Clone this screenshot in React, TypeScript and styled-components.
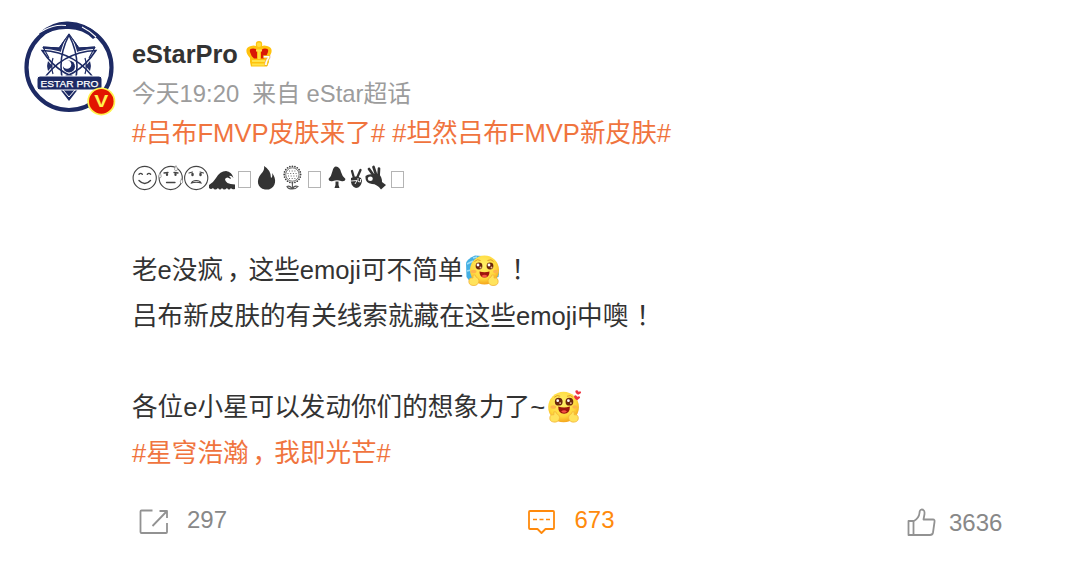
import React from 'react';
import styled, { createGlobalStyle } from 'styled-components';

const Global = createGlobalStyle`
  body { margin: 0; background: #fff; }
  * { box-sizing: border-box; }
  svg { display: block; flex: none; }
`;

const Post = styled.article`
  display: flex;
  width: 1080px;
  height: 562px;
  padding: 20px 0 0 22px;
  background: #fff;
  color: #333;
  font-family: "Liberation Sans", "Noto Sans CJK SC", sans-serif;
  font-size: 25.6px;
`;
const AvatarColumn = styled.div`
  width: 110px;
  flex: none;
`;
const Content = styled.div`
  flex: 1;
  display: flex;
  flex-direction: column;
  padding-top: 14px;
`;
const Row = styled.div<{ $h: number; $lift?: number }>`
  display: flex;
  align-items: center;
  height: ${(p) => p.$h}px;
  padding-bottom: ${(p) => p.$lift ?? 0}px;
  white-space: pre;
`;
const Name = styled.span`
  font-weight: 700;
  font-size: 25.4px;
  margin-right: 8px;
`;
const Meta = styled.span`
  font-size: 23.8px;
  color: #9c9c9c;
`;
const Topic = styled.span`
  color: #f0743e;
`;
const Punct = styled.span<{ $indent: number }>`
  display: inline-block;
  width: 1em;
  padding-left: ${(p) => p.$indent}px;
  font-feature-settings: "halt";
`;
const Box = styled.span`
  width: 13px;
  height: 17px;
  border: 1px solid #b4b4b4;
  margin: 2px 4px 0 3px;
`;
const Sticker = styled.span`
  display: flex;
  padding: 4px 1px 0 3px;
`;
const Actions = styled.footer`
  display: flex;
  height: 50px;
  margin-top: 18px;
  padding-left: 6px;
`;
const Action = styled.div<{ $w: number; $color: string; $gap: number; $top: number }>`
  display: flex;
  align-items: center;
  width: ${(p) => p.$w}px;
  height: 50px;
  padding-top: ${(p) => p.$top}px;
  gap: ${(p) => p.$gap}px;
  color: ${(p) => p.$color};
  font-size: 24px;
`;

const lens = 'M47 15 Q63 46 47 77 Q31 46 47 15Z';
const turns = [0, 60, 120];

const Avatar = () => (
  <svg width="96" height="98" viewBox="0 0 96 98">
    <circle cx="47" cy="47.500" r="42.500" fill="#fff" stroke="#1d2a64" strokeWidth="4.200" />
    <path d="M17 13 Q30 1 46 1.500 Q64 2 77 15 L71 19 Q61 9 47 9 Q31 8 19 17Z" fill="#1d2a64" />
    <path d="M22 10 Q33 4 44 5.500 M15 14 L24 9 M60 7 Q68 11 74 17" fill="none" stroke="#fff" strokeWidth="1.100" />
    <g fill="none" stroke="#1d2a64">
      <path d="M47 14 L57 28 L73 27 L67 38 A25 25 0 0 1 67 54 L73 63 L57 65 L47 79 L37 65 L21 63 L27 54 A25 25 0 0 1 27 38 L21 27 L37 28Z" fill="#25316a" strokeWidth="1" />
      {turns.map((t) => <path key={t} d={lens} fill="#fff" stroke="#fff" strokeWidth="3.500" transform={`rotate(${t} 47 46)`} />)}
      <path d="M47 14 L56 27 M47 14 L38 27 M21 27 L37 28 M73 27 L57 28 M21 27 L27 38 M73 27 L67 38" strokeWidth="1.200" />
      {turns.map((t) => <path key={t} d={lens} strokeWidth="1.600" transform={`rotate(${t} 47 46)`} />)}
      <path d="M31 38 A26 26 0 0 0 31 54 M63 38 A26 26 0 0 1 63 54" strokeWidth="1.200" />
    </g>
    <circle cx="47" cy="46.500" r="6" fill="#1d2a64" />
    <circle cx="45" cy="44.500" r="4.300" fill="#fff" />
    <path d="M37 68 H57 L47 81Z" fill="#1d2a64" />
    <path d="M41 70 L47 77 L53 70" fill="none" stroke="#fff" />
    <rect x="15" y="56" width="65" height="14" rx="3" fill="#1d2a64" stroke="#fff" strokeWidth="1" />
    <text x="18.500" y="66.500" textLength="58" lengthAdjust="spacingAndGlyphs" fill="#fff" stroke="#fff" strokeWidth=".25" fontFamily="Liberation Sans, sans-serif" fontSize="9.200">ESTAR PRO</text>
    <circle cx="79.300" cy="81.400" r="14" fill="#fff34f" />
    <circle cx="79.300" cy="81.400" r="12.300" fill="#e21500" />
    <text x="72.300" y="87" textLength="14" lengthAdjust="spacingAndGlyphs" fill="#fff34f" fontFamily="Liberation Sans, sans-serif" fontWeight="700" fontSize="16.500">V</text>
  </svg>
);

const Crown = () => (
  <svg width="26" height="28" viewBox="0 0 26 28">
    <path d="M4 18 C-1 13 -1 7 5 6 Q8 5 10 6 Q9 1 13 1 Q17 1 16 6 Q18 5 21 6 C27 7 27 13 22 18 L23 22 L21 26.500 H5 L4 22Z" fill="#ffc20d" />
    <path d="M4 12 Q3 8.500 7 8.500 Q11 8.500 11 12 V18.500 H8 Q5 16 4 12 M22 12 Q23 8.500 19 8.500 Q15 8.500 15 12 V18.500 H18 Q21 16 22 12" fill="#d91806" />
    <path d="M10 10.500 H16 M13 10.500 V19" stroke="#ffe34a" strokeWidth="1.800" />
    <circle cx="13" cy="4.800" r="2.200" fill="#ffdf3d" />
    <path d="M6 21 H19 M6 24.500 H19" stroke="#ffe34a" strokeWidth="1.800" />
    <text x="17.500" y="25" fill="#fff" stroke="#f2b51c" strokeWidth="1.500" paintOrder="stroke" fontFamily="Liberation Sans, sans-serif" fontWeight="700" fontSize="12">7</text>
  </svg>
);

const Face = ({ kind }: { kind: 'smile' | 'sweat' | 'worry' }) => (
  <svg width={kind === 'worry' ? 25 : 26} height="28" viewBox={kind === 'worry' ? '.5 0 25 28' : '0 0 26 28'} fill="none" stroke="#444" strokeWidth="1.100" strokeLinecap="round">
    <circle cx="12.700" cy="14" r="11.600" />
    {kind === 'smile' && <path d="M7 16.500 Q12.700 22.500 18.500 16.500 M7 10.200 Q8.700 8.500 10.300 10.200 M15.300 10.200 Q17 8.500 18.600 10.200" strokeWidth="1.400" />}
    {kind === 'sweat' && <><path d="M6 9 L10 8.500 M16 8.500 L20 9 M8.500 18.500 H17" strokeWidth="1.300" /><path d="M9 10 V11 M17.500 10 V11" strokeWidth="2.200" /><path d="M18 2 Q15 6 18 7 Q21 6 18 2 M23.500 15 Q21 18.500 23.500 19.500 Q26 18.500 23.500 15 M2 9 Q-.5 13 2 14 Q4.500 13 2 9" fill="#fff" stroke="#888" strokeWidth=".8" /></>}
    {kind === 'worry' && <><path d="M5.500 9 L9 8 M16.500 8 L20 9 M8 19 Q9 16.500 12.700 16.500 Q16.500 16.500 17.500 19 Q12.700 17.500 8 19Z" /><path d="M9 10 V11 M17 10 V11" strokeWidth="2.400" /></>}
  </svg>
);

const Wave = () => (
  <svg width="26" height="28" viewBox="0 0 26 28">
    <path d="M0 24 V21 Q4 19 7 14 Q11 7 17 7 Q23 8 24.500 14 Q22 11 20 12 Q22.500 14 21.500 15 Q18 12 16 15 Q16 20 26 20.500 V25 Q23 26 22 24 Q20 27 18 24 Q15 27 13 24 Q11 27 9 24 Q6 27 4 24 Q2 26 0 24" fill="#333" />
  </svg>
);
const Fire = () => (
  <svg width="24" height="28" viewBox="0 0 24 28">
    <path d="M9 2 Q10 6 6 10 C1 16 2 24 10 25.500 H14 C21 23 22 15 17 9 Q18 13 16 14 Q16 6 9 2" fill="#333" />
  </svg>
);
const petals = Array.from({ length: 20 }, (_, i) => {
  const a = (i * Math.PI) / 10;
  return { x: 13.4 + Math.cos(a) * 8.2, y: 10.5 + Math.sin(a) * 8.2 };
});
const Sunflower = () => (
  <svg width="26" height="28" viewBox="0 0 26 28" fill="none" stroke="#555">
    {petals.map((p, i) => <circle key={i} cx={p.x} cy={p.y} r=".900" fill="#444" stroke="none" />)}
    <circle cx="13.400" cy="10.500" r="6.700" strokeWidth=".8" />
    <path d="M10 7 H18 M8.500 9.500 H19 M9 12 H19 M10 14.500 H17" strokeDasharray="1 1.700" strokeWidth=".9" />
    <path d="M13.400 18 V25.500 M13.400 25 Q11 21 8 22.500 Q9 25 13.400 25 Q17 25 19 22.500 Q15 21 13.400 25" strokeWidth="1.100" />
  </svg>
);
const Mushroom = () => (
  <svg width="24" height="28" viewBox="0 0 24 28">
    <path d="M11 2.500 Q15 3 16 8 Q17 12 20.500 15 Q20 18 16 17 Q12 15.500 8 17 Q4 18 3.500 15 Q6.500 12 7.500 7 Q8.500 2.500 11 2.500" fill="#333" />
    <path d="M10.500 17.500 H13.500 Q13 21 14.500 24 H9.500 Q11 21 10.500 17.500" fill="#333" />
  </svg>
);
const Victory = () => (
  <svg width="15" height="28" viewBox="0 0 15 28">
    <path d="M5 14 L3 7 M8 14 L11.500 6" stroke="#333" strokeWidth="2.300" strokeLinecap="round" />
    <path d="M2 14 Q7 11 12 14 L13 17 Q12 23.500 7 24 Q1 22 2 14" fill="#333" />
    <path d="M2 17 L8 16.500 L6 20 M9 14 V17.500 L11.500 18 V15" fill="none" stroke="#fff" strokeWidth=".9" />
  </svg>
);
const OkHand = () => (
  <svg width="24" height="28" viewBox="0 0 24 28">
    <path d="M10 12 L5 5 M12.500 12 L9.500 3 M14.500 13 L15 4.500" stroke="#333" strokeWidth="2.700" strokeLinecap="round" />
    <path d="M1.500 12 Q5 9 11 11 L15 10 Q18 13 18 18 L22 21 L17 25.500 Q13 20 8 20 Q1.500 19 1.500 14Z" fill="#333" />
    <ellipse cx="6.300" cy="14.700" rx="2.500" ry="2.200" fill="#fff" />
  </svg>
);

const YellowFace = ({ variant }: { variant: 'hug' | 'love' }) => {
  const hug = variant === 'hug';
  return (
    <svg width="36" height="36" viewBox={hug ? '1 0 36 36' : '1 0 37 36'}>
      <defs>
        <radialGradient id={variant} cx=".45" cy=".35" r=".65">
          <stop offset="0" stopColor="#fff16a" />
          <stop offset=".7" stopColor="#ffd83c" />
          <stop offset="1" stopColor="#f5a51d" />
        </radialGradient>
      </defs>
      {hug && <path d="M1 11 Q2 7 10 3.500 L17 4 L30 11 Q35 18 33.500 25 L12 31 Q5 31 1.500 25Z" fill="#43afe3" />}
      {hug && <path d="M2 12 L8 9 M2 19 L6 18 M8 6 L12 5" stroke="#a0def8" strokeWidth="1.500" />}
      <circle cx={hug ? 19.5 : 17} cy="18" r={hug ? 14.5 : 15.8} fill={`url(#${variant})`} />
      <g transform={hug ? 'translate(1.500 1.500)' : 'translate(-.500 0)'}>
        <ellipse cx="7" cy="18" rx="3" ry="1.800" fill="#ffb54a" />
        <ellipse cx="29" cy="18" rx="2.500" ry="1.800" fill="#ffb54a" />
        <path d="M8 8 Q11 5 14 7 M21 7 Q25 5 27 8" fill="none" stroke="#d48b22" strokeWidth=".8" />
        <circle cx="12.500" cy="12.500" r={hug ? 3.4 : 4} fill="#6a260c" />
        <circle cx="23.500" cy="12.500" r={hug ? 3.4 : 4} fill="#6a260c" />
        <circle cx="11.500" cy="11.500" r="1.400" fill="#fff" />
        <circle cx="22.500" cy="11.500" r="1.400" fill="#fff" />
        <circle cx="14" cy="14" r="1" fill="#edbc95" />
        <circle cx="25" cy="14" r="1" fill="#edbc95" />
        <path d={hug ? 'M13 18 Q18 19.500 23 18 Q23 24 18 24 Q13 24 13 18' : 'M12 17.500 Q18 19.500 24 17.500 Q24 25 18 25 Q12 25 12 17.500'} fill="#9d150c" />
        <path d="M15 22.500 Q18 20 21 22.500 Q18 25.500 15 22.500" fill="#f75245" />
      </g>
      <path d="M8 23 Q11 22 11 25 Q14 26 14 29 Q13 34 8 33.500 Q3 33 4 28 Q5 25 8 26Z M29 23 Q26 22 26 25 Q23 26 23 29 Q24 34 29 33.500 Q34 33 33 28 Q32 25 29 26Z" transform={hug ? undefined : 'translate(-1 0)'} fill="#ffe35c" stroke="#f3b438" strokeWidth=".8" />
      {!hug && <path d="M31 11 Q27 9 28 6.500 Q30 5 31 7.500 Q34 6 34 8.500Z M32 5.500 Q28 3 29.500 1 Q32 0 32.500 2.500 Q35 1 35 3.500Z" fill="#ed3441" />}
    </svg>
  );
};

const ShareIcon = () => (
  <svg width="32" height="30" viewBox="0 -1 32 30" fill="none" stroke="#929292" strokeWidth="1.800" strokeLinejoin="round">
    <path d="M14.500 4.500 H3.500 Q2.500 4.500 2.500 5.500 V26 Q2.500 27 3.500 27 H28 Q29 27 29 26 V17 M14.500 20 L29 5 M21.500 5 H29 V12" />
  </svg>
);
const CommentIcon = () => (
  <svg width="30" height="30" viewBox=".5 -1 30 30" fill="none" stroke="#ff8a0c" strokeWidth="1.800" strokeLinejoin="round">
    <path d="M3.500 5 H26.500 Q27.500 5 27.500 6 V22 Q27.500 23 26.500 23 H19 L15 27 L11 23 H3.500 Q2.500 23 2.500 22 V6 Q2.500 5 3.500 5Z" />
    <path d="M6.500 13.500 H10.500 M13 13.500 H17 M19.500 13.500 H23.500" strokeWidth="1.600" />
  </svg>
);
const LikeIcon = () => (
  <svg width="30" height="30" viewBox="0 0 30 30" fill="none" stroke="#929292" strokeWidth="1.800" strokeLinejoin="round">
    <path d="M2.500 13 H8 Q13 10 13.500 5 Q13.500 2 15.500 1.500 Q19 1.500 18.500 6 L17.500 11.500 H27 Q29 11.500 28.500 14 L27 24.500 Q26.500 27 24 27 H2.500Z M7.500 13 V27" />
  </svg>
);

export default function App() {
  return (
    <>
      <Global />
      <Post>
        <AvatarColumn><Avatar /></AvatarColumn>
        <Content>
          <Row $h={40}><Name>eStarPro</Name><Crown /></Row>
          <Row $h={39} $lift={4}><Meta>今天19:20&nbsp; 来自 eStar超话</Meta></Row>
          <Row $h={40} $lift={6}><Topic>#吕布FMVP皮肤来了# #坦然吕布FMVP新皮肤#</Topic></Row>
          <Row $h={50}>
            <Face kind="smile" /><Face kind="sweat" /><Face kind="worry" /><Wave /><Box />
            <Fire /><Sunflower /><Box /><Mushroom /><Victory /><OkHand /><Box />
          </Row>
          <Row $h={45} />
          <Row $h={46} $lift={7}>
            <span>老e没疯<Punct $indent={4}>，</Punct>这些emoji可不简单</span>
            <Sticker><YellowFace variant="hug" /></Sticker>
            <Punct $indent={8}>！</Punct>
          </Row>
          <Row $h={46} $lift={7}><span>吕布新皮肤的有关线索就藏在这些emoji中噢<Punct $indent={8}>！</Punct></span></Row>
          <Row $h={45} />
          <Row $h={46} $lift={7}>
            <span>各位e小星可以发动你们的想象力了~</span>
            <Sticker><YellowFace variant="love" /></Sticker>
          </Row>
          <Row $h={46} $lift={7}><Topic>#星穹浩瀚<Punct $indent={4}>，</Punct>我即光芒#</Topic></Row>
          <Actions>
            <Action $w={389} $color="#888" $gap={17} $top={0}><ShareIcon />297</Action>
            <Action $w={379} $color="#ff8a0c" $gap={17.5} $top={0}><CommentIcon />673</Action>
            <Action $w={110} $color="#888" $gap={13} $top={5}><LikeIcon />3636</Action>
          </Actions>
        </Content>
      </Post>
    </>
  );
}
